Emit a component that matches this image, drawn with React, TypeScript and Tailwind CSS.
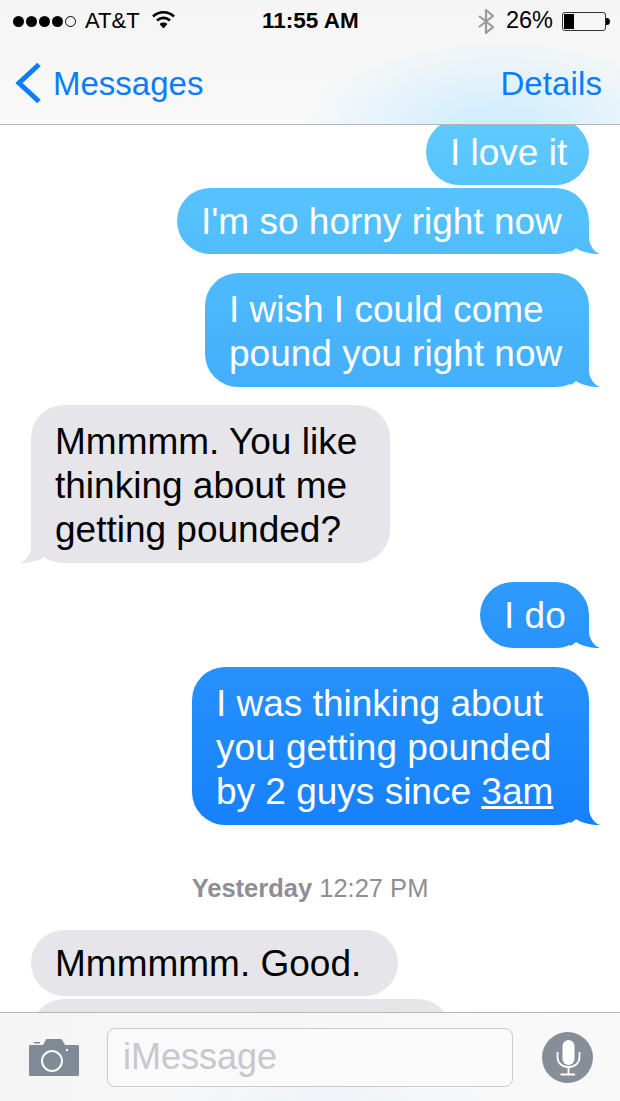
import type { ReactNode } from 'react';

const blue = 'bg-[linear-gradient(180deg,#5ecafd_11%,#1681fb_75%)] bg-fixed';

function Sent({ children, w, py = 'pt-[15px] pb-[11px]', tail = true }: { children: ReactNode; w: string; py?: string; tail?: boolean }) {
  return (
    <div className={`relative self-end mr-[31px] ${w}`}>
      <div className={`${blue} rounded-[33px] px-6 ${py} text-white whitespace-nowrap`}>{children}</div>
      {tail && (
        <div
          className={`${blue} absolute right-[-11px] bottom-0 w-[30px] h-[33px] [clip-path:path('M19_0L19_16C19_24_24_31_30_33C21_33_12_31_6_27C4_29_2_30_0_31L0_0Z')]`}
        />
      )}
    </div>
  );
}

function Received({ children, w, py = 'pt-[15px] pb-[11px]', tail = true }: { children: ReactNode; w: string; py?: string; tail?: boolean }) {
  return (
    <div className={`relative self-start ml-[31px] ${w}`}>
      <div className={`bg-[#e5e5ea] rounded-[33px] px-6 ${py} text-black whitespace-nowrap`}>{children}</div>
      {tail && (
        <div className="bg-[#e5e5ea] absolute left-[-11px] bottom-0 w-[30px] h-[33px] [clip-path:path('M11_0L11_16C11_24_6_31_0_33C9_33_18_31_24_27C26_29_28_30_30_31L30_0Z')]" />
      )}
    </div>
  );
}

function StatusBar() {
  return (
    <div className="h-[42px] flex items-center text-[22px] leading-none text-black relative">
      <div className="flex items-center gap-[2px] ml-[13px]">
        {[0, 1, 2, 3].map((i) => (
          <span key={i} className="w-[11px] h-[11px] rounded-full bg-black" />
        ))}
        <span className="w-[11px] h-[11px] rounded-full border border-black" />
      </div>
      <span className="ml-[9px]">AT&amp;T</span>
      <svg className="ml-[12px] mb-[4px]" width="23" height="19" viewBox="0 0 23 19" fill="none" stroke="#000">
        <path d="M1 6.5C6.8 .8 16.2 .8 22 6.5" strokeWidth="2.6" />
        <path d="M5 10.5C8.8 7 14.2 7 18 10.5" strokeWidth="2.6" />
        <path d="M8 14C10 12.6 13 12.6 15 14L11.5 18Z" fill="#000" strokeWidth="1" />
      </svg>
      <span className="absolute left-[262px] font-semibold text-[22.5px]">11:55 AM</span>
      <div className="ml-auto flex items-center mr-[10px]">
        <svg width="16" height="25" viewBox="0 0 16 25" fill="none" stroke="#9a9a9a" strokeWidth="2.2">
          <path d="M1 7L15 18L8 24V1L15 7L1 18" />
        </svg>
        <span className="ml-[12px] text-[23.5px]">26%</span>
        <div className="ml-[9px] w-[44px] h-[19px] border border-[#333] rounded-[3px] p-[1px]">
          <div className="w-[10px] h-full bg-black" />
        </div>
        <div className="w-[4px] h-[7px] bg-black rounded-r-full" />
      </div>
    </div>
  );
}

function Header() {
  return (
    <div className="relative z-10 h-[125px] flex-none border-b border-[#b5b5b7] bg-[radial-gradient(ellipse_200px_90px_at_500px_128px,#d4eefd_20%,transparent),linear-gradient(180deg,#f5f5f5,#f9f9f9)]">
      <StatusBar />
      <div className="h-[82px] flex items-center text-[#0a7cff] text-[33px] leading-none">
        <svg className="ml-[14px]" width="28" height="42" viewBox="0 0 28 42" fill="none" stroke="#0a7cff" strokeWidth="5">
          <path d="M25 2.5L5 21L25 39.5" />
        </svg>
        <span className="ml-[11px]">Messages</span>
        <span className="ml-auto mr-[18px] tracking-[0.1px]">Details</span>
      </div>
    </div>
  );
}

function Footer() {
  return (
    <div className="relative z-10 h-[89px] flex-none border-t border-[#b5b5b7] bg-[radial-gradient(ellipse_180px_40px_at_330px_89px,#f0f4f9,transparent),linear-gradient(90deg,#f5f5f5,#f9f9f9)] flex items-center">
      <svg className="ml-[29px]" width="50" height="37" viewBox="0 0 50 37">
        <path
          fill="#7f8a96"
          d="M2 6H14L16.5 1.5C17 .5 17.5 0 18.5 0H31.5C32.5 0 33 .5 33.5 1.5L36 6H48C49.5 6 50 6.5 50 8V35C50 36.5 49.5 37 48 37H2C.5 37 0 36.5 0 35V8C0 6.5 .5 6 2 6Z"
        />
        <path d="M5 3H11V4.5H5Z" fill="#7f8a96" />
        <circle cx="23" cy="22" r="10" fill="none" stroke="#f7f7f8" strokeWidth="2" />
        <circle cx="38" cy="11" r="1.2" fill="#f7f7f8" />
      </svg>
      <div className="ml-[28px] w-[406px] h-[59px] rounded-[8px] border border-[#c9c9ce] bg-[#fafafa] flex items-center pl-[15px] text-[36px] text-[#c7c7cd]">
        iMessage
      </div>
      <svg className="ml-[29px]" width="51" height="51" viewBox="0 0 51 51" fill="none" stroke="#fff" strokeWidth="1.8">
        <circle cx="25.5" cy="25.5" r="25.5" fill="#868e98" stroke="none" />
        <rect x="20.5" y="8" width="12" height="25" rx="6" fill="#fff" stroke="none" />
        <path d="M15.5 20V25C15.5 31 20 35 26.5 35C33 35 37.5 31 37.5 25V20" />
        <path d="M26.5 35V42.5M18.5 42.5H33" />
      </svg>
    </div>
  );
}

export default function App() {
  return (
    <div className="w-[620px] h-[1101px] flex flex-col overflow-hidden bg-white font-['Liberation_Sans',Arial,sans-serif] text-[37px] leading-[44px]">
      <Header />
      <div className="flex-1 min-h-0 overflow-hidden flex flex-col">
        <div className="flex flex-col mt-[-6px]">
          <Sent w="w-[163px]" py="pt-[12px] pb-[10px]" tail={false}>I love it</Sent>
          <div className="h-[3px]" />
          <Sent w="w-[412px]" py="pt-[12px] pb-[10px]">I'm so horny right now</Sent>
          <div className="h-[19px]" />
          <Sent w="w-[384px]">
            I wish I could come
            <br />
            pound you right now
          </Sent>
          <div className="h-[18px]" />
          <Received w="w-[359px]">
            Mmmmm. You like
            <br />
            thinking about me
            <br />
            getting pounded?
          </Received>
          <div className="h-[19px]" />
          <Sent w="w-[109px]" py="pt-[12px] pb-[10px]">I do</Sent>
          <div className="h-[19px]" />
          <Sent w="w-[397px]">
            I was thinking about
            <br />
            you getting pounded
            <br />
            by 2 guys since <span className="underline">3am</span>
          </Sent>
          <div className="mt-[46px] mb-[25px] text-center text-[25.5px] leading-[34px] text-[#8e8e93]">
            <span className="font-bold">Yesterday</span> 12:27 PM
          </div>
          <Received w="w-[367px]" py="pt-[12px] pb-[10px]" tail={false}>Mmmmmm. Good.</Received>
          <div className="h-[3px]" />
          <div className="self-start ml-[31px] w-[420px] h-[66px] rounded-[33px] bg-[#e5e5ea]" />
        </div>
      </div>
      <Footer />
    </div>
  );
}
